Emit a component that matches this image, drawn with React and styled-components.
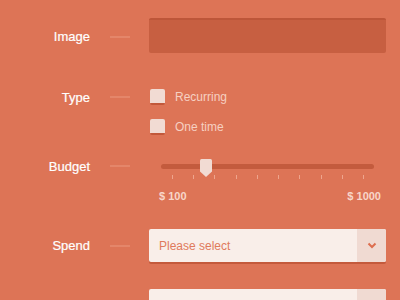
import styled, { createGlobalStyle } from 'styled-components'

const GlobalStyle = createGlobalStyle`
  html, body {
    margin: 0;
    background: #dd7456;
    font-family: "Liberation Sans", Arial, sans-serif;
  }
`

const Form = styled.div`
  width: 400px;
  height: 300px;
  overflow: hidden;
  padding-top: 18px;
  box-sizing: border-box;
`

const Field = styled.div`
  display: grid;
  grid-template-columns: 90px 20px 236px;
  column-gap: 20px;
  align-items: start;
  margin-top: ${p => p.$mt || 0}px;
`

const Label = styled.div`
  height: ${p => p.$h}px;
  display: flex;
  align-items: center;
  justify-content: flex-end;
  color: #fff;
  font-size: 13px;
  -webkit-text-stroke: 0.2px #fff;
`

const Dash = styled.div`
  height: ${p => p.$h}px;
  display: flex;
  align-items: center;
  &::before {
    content: '';
    width: 20px;
    height: 2px;
    background: ${p => (p.$off ? 'transparent' : '#e4866a')};
  }
`

const Control = styled.div`
  margin-left: -1px;
`

const ImageInput = styled.div`
  height: 35px;
  box-sizing: border-box;
  background: #c75f41;
  border-top: 2px solid #bd5639;
  border-radius: 2px;
`

const CheckList = styled.div`
  display: flex;
  flex-direction: column;
  gap: 14px;
`

const CheckRow = styled.label`
  display: flex;
  align-items: center;
  gap: 10px;
  height: 16px;
  color: #f6d0c2;
  font-size: 12px;
`

const Box = styled.span`
  width: 15px;
  height: 16px;
  box-sizing: border-box;
  background: #f1dbd3;
  border-bottom: 2px solid #c2583a;
  border-radius: 2px;
  margin-left: 1px;
`

const Slider = styled.div`
  position: relative;
  padding-top: 8px;
`

const Track = styled.div`
  margin: 0 12px;
  height: 5px;
  border-radius: 3px;
  background: #c35b3d;
`

const Ticks = styled.div`
  display: flex;
  justify-content: space-between;
  margin: 6px 0 0 23px;
  width: 192px;
`

const Tick = styled.span`
  width: 1px;
  height: 4px;
  background: #eea58d;
`

const Thumb = styled.svg`
  position: absolute;
  left: 51px;
  top: 3px;
`

const Values = styled.div`
  display: flex;
  justify-content: space-between;
  padding: 0 5px 0 10px;
  margin-top: 11px;
  font-size: 11px;
  font-weight: 700;
  line-height: 12px;
  color: #f8d6c9;
`

const Select = styled.div`
  display: flex;
  height: 33px;
  background: #f9eee9;
  border-radius: 2px;
  box-shadow: 0 2px 0 #c45a3c;
  overflow: hidden;
`

const Placeholder = styled.span`
  flex: 1;
  display: flex;
  align-items: center;
  padding-left: 10px;
  font-size: 12px;
  color: #e07a5c;
`

const Caret = styled.span`
  width: 29px;
  display: flex;
  align-items: center;
  justify-content: center;
  background: #f0dad2;
`

const Chevron = () => (
  <svg width="10" height="7" viewBox="0 0 10 7">
    <path d="M1.5 1.5 L5 5 L8.5 1.5" fill="none" stroke="#dd6e4f" strokeWidth="2" />
  </svg>
)

const Dropdown = ({ text }) => (
  <Select>
    <Placeholder>{text}</Placeholder>
    <Caret><Chevron /></Caret>
  </Select>
)

export default function App() {
  const ticks = Array.from({ length: 10 })
  return (
    <>
      <GlobalStyle />
      <Form>
        <Field>
          <Label $h={37}>Image</Label>
          <Dash $h={37} />
          <Control><ImageInput /></Control>
        </Field>

        <Field $mt={34}>
          <Label $h={16}>Type</Label>
          <Dash $h={16} />
          <Control>
            <CheckList>
              <CheckRow><Box />Recurring</CheckRow>
              <CheckRow><Box />One time</CheckRow>
            </CheckList>
          </Control>
        </Field>

        <Field $mt={21}>
          <Label $h={20}>Budget</Label>
          <Dash $h={20} />
          <Control>
            <Slider>
              <Track />
              <Ticks>
                {ticks.map((_, i) => <Tick key={i} />)}
              </Ticks>
              <Values>
                <span>$ 100</span>
                <span>$ 1000</span>
              </Values>
              <Thumb width="12" height="18" viewBox="0 0 12 18">
                <path d="M1.5 0 H10.5 Q12 0 12 1.5 V12.5 L6 18 L0 12.5 V1.5 Q0 0 1.5 0 Z" fill="#f1dbd3" />
              </Thumb>
            </Slider>
          </Control>
        </Field>

        <Field $mt={27}>
          <Label $h={33}>Spend</Label>
          <Dash $h={33} />
          <Control><Dropdown text="Please select" /></Control>
        </Field>

        <Field $mt={27}>
          <Label $h={33} />
          <Dash $h={33} $off />
          <Control><Dropdown text="" /></Control>
        </Field>
      </Form>
    </>
  )
}
